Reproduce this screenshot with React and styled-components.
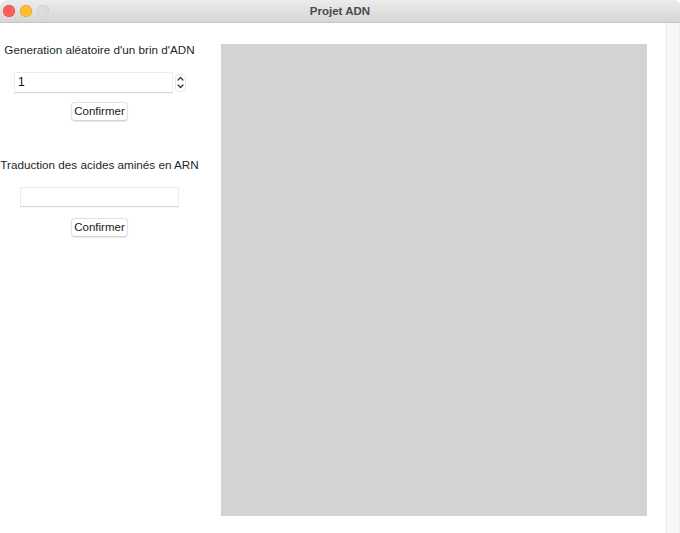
import styled, { createGlobalStyle } from 'styled-components';

const GlobalStyle = createGlobalStyle`
  html, body {
    margin: 0;
    padding: 0;
    background: #ffffff;
  }
  body {
    font-family: "Liberation Sans", Arial, sans-serif;
    color: #222;
  }
`;

const Window = styled.div`
  width: 680px;
  height: 533px;
  display: flex;
  flex-direction: column;
  overflow: hidden;
  background: #ffffff;
`;

const TitleBar = styled.div`
  position: relative;
  height: 22px;
  flex: none;
  display: flex;
  align-items: center;
  justify-content: center;
  background: linear-gradient(#ececec, #d6d6d6);
  border-bottom: 1px solid #c4c4c4;
  border-top-right-radius: 6px;
  border-top-left-radius: 6px;
`;

const Lights = styled.div`
  position: absolute;
  left: 3px;
  top: 5px;
  display: flex;
  gap: 5px;
`;

const Light = styled.span`
  width: 12px;
  height: 12px;
  border-radius: 50%;
  background: ${p => p.$color};
  box-shadow: inset 0 0 0 0.5px ${p => p.$edge};
`;

const Title = styled.span`
  font-size: 11.5px;
  font-weight: bold;
  color: #4a4a4a;
`;

const Content = styled.div`
  flex: 1;
  display: flex;
  min-height: 0;
`;

const Side = styled.div`
  width: 199px;
  flex: none;
  display: flex;
  flex-direction: column;
  align-items: center;
  padding-top: 20px;
`;

const Label = styled.div`
  font-size: 11.7px;
  line-height: 14px;
  color: #1f1f1f;
  white-space: nowrap;
  margin-top: ${p => p.$top || 0}px;
`;

const SpinRow = styled.div`
  display: flex;
  align-items: center;
  gap: 2px;
  margin-top: 15px;
  padding-left: 1px;
`;

const Field = styled.div`
  box-sizing: border-box;
  width: ${p => p.$width}px;
  height: ${p => p.$height}px;
  margin-top: ${p => p.$top || 0}px;
  background: #fff;
  border: 1px solid #ececec;
  border-bottom-color: #d9d9d9;
  box-shadow: 0 1px 0 rgba(0, 0, 0, 0.04);
  font-size: 12px;
  line-height: ${p => p.$height - 2}px;
  padding-left: 3px;
  color: #111;
`;

const Stepper = styled.div`
  box-sizing: border-box;
  width: 11px;
  height: 18px;
  border: 1px solid #e6e6e6;
  border-radius: 4px;
  display: flex;
  flex-direction: column;
  align-items: center;
  justify-content: space-around;
  background: #fff;
`;

const Button = styled.button`
  box-sizing: border-box;
  margin-top: ${p => p.$top}px;
  height: 19px;
  padding: 0 2px;
  font-family: "Liberation Sans", Arial, sans-serif;
  font-size: 11.5px;
  line-height: 17px;
  color: #1a1a1a;
  background: #ffffff;
  border: 1px solid #e2e2e2;
  border-bottom-color: #d2d2d2;
  border-radius: 4px;
  box-shadow: 0 0.5px 1px rgba(0, 0, 0, 0.08);
`;

const CanvasArea = styled.div`
  flex: 1;
  padding: 21px 19px 17px 22px;
  display: flex;
`;

const Canvas = styled.div`
  flex: 1;
  background: #d3d3d3;
`;

const Strip = styled.div`
  width: 12px;
  flex: none;
  background: #f7f7f7;
  border-left: 1px solid #e8e8e8;
  border-right: 1px solid #ececec;
`;

function Chevron({ up }) {
  return (
    <svg width="7" height="5" viewBox="0 0 7 5">
      <path
        d={up ? 'M1 4 L3.5 1.5 L6 4' : 'M1 1 L3.5 3.5 L6 1'}
        fill="none"
        stroke="#333"
        strokeWidth="1.2"
        strokeLinecap="round"
        strokeLinejoin="round"
      />
    </svg>
  );
}

export default function App() {
  return (
    <>
      <GlobalStyle />
      <Window>
        <TitleBar>
          <Lights>
            <Light $color="#fe5f57" $edge="#e0443e" />
            <Light $color="#febc2e" $edge="#dea123" />
            <Light $color="#dcdcdc" $edge="#c8c8c8" />
          </Lights>
          <Title>Projet ADN</Title>
        </TitleBar>
        <Content>
          <Side>
            <Label>Generation aléatoire d'un brin d'ADN</Label>
            <SpinRow>
              <Field $width={159} $height={21}>1</Field>
              <Stepper>
                <Chevron up />
                <Chevron />
              </Stepper>
            </SpinRow>
            <Button $top={9}>Confirmer</Button>
            <Label $top={37}>Traduction des acides aminés en ARN</Label>
            <Field $width={159} $height={20} $top={15} />
            <Button $top={11}>Confirmer</Button>
          </Side>
          <CanvasArea>
            <Canvas />
          </CanvasArea>
          <Strip />
        </Content>
      </Window>
    </>
  );
}
